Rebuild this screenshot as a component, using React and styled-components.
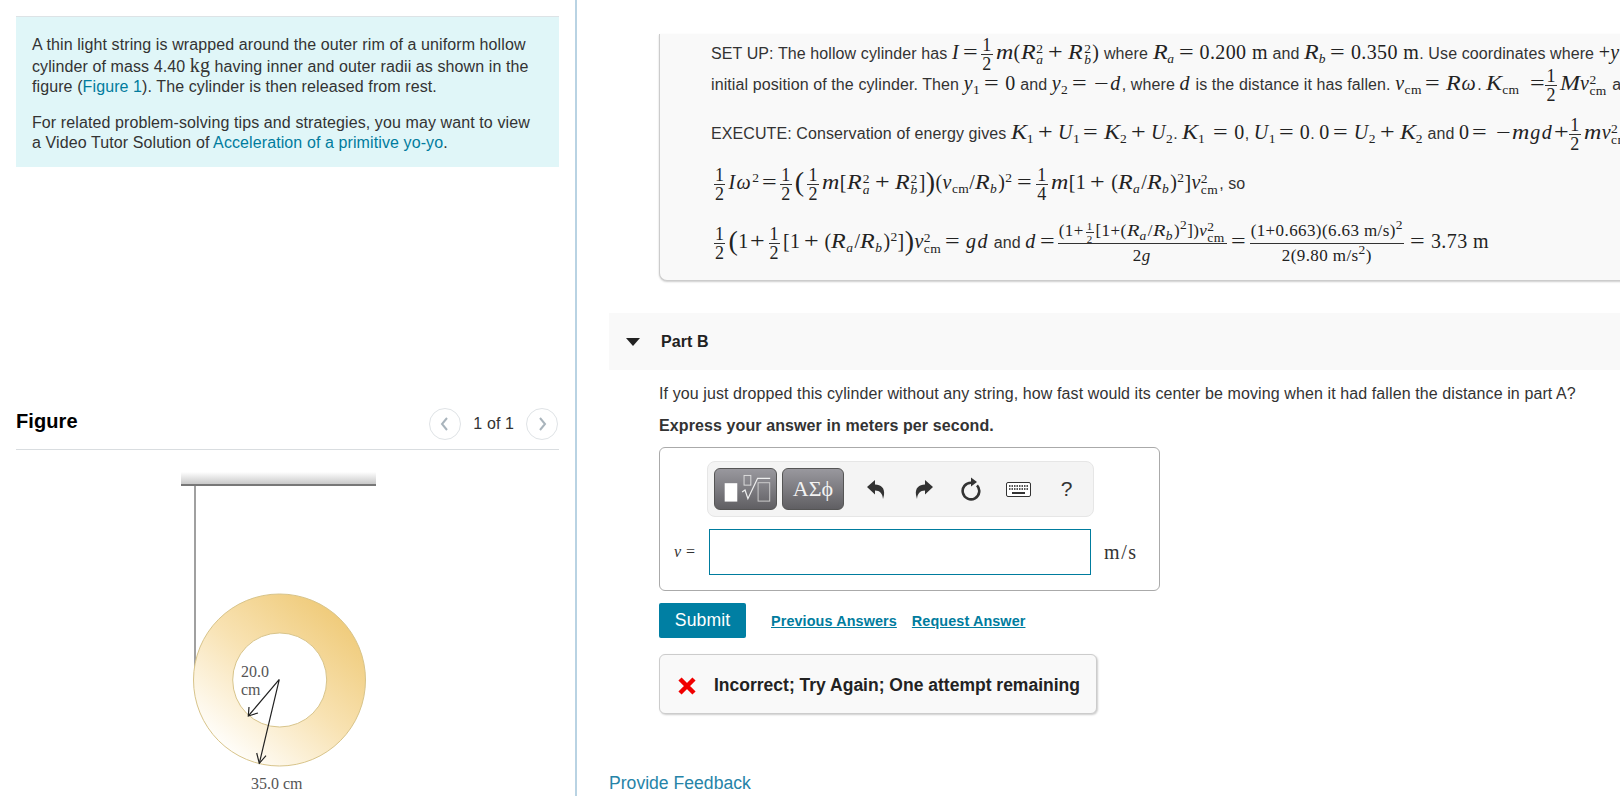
import React from 'react';
import styled, { createGlobalStyle } from 'styled-components';

const Global = createGlobalStyle`
  html, body {
    margin: 0;
    padding: 0;
    height: 796px;
    overflow: hidden;
    background: #fff;
    font-family: "Liberation Sans", Arial, sans-serif;
    font-size: 16px;
    letter-spacing: 0.1px;
    color: #333;
  }
`;

const Page = styled.div`
  display: flex;
  width: 1620px;
  height: 796px;
  overflow: hidden;
`;

const LeftPane = styled.div`
  box-sizing: border-box;
  width: 577px;
  flex: none;
  padding: 16px 16px 0;
  border-right: 2px solid #b9d3e3;
`;

const InfoBox = styled.div`
  box-sizing: border-box;
  height: 151px;
  padding: 18px 16px 0;
  line-height: 20px;
  background: #e0f6f8;
  border-top: 1px solid #dde3e6;
`;

const Para = styled.p`
  margin: 0 0 16px;
  white-space: nowrap;
`;

const TextLink = styled.a`
  color: #007c9e;
`;

const Kg = styled.span`
  font-family: "Liberation Serif", serif;
  font-size: 20px;
`;

const FigureHeader = styled.div`
  display: flex;
  justify-content: space-between;
  align-items: flex-start;
  height: 31px;
  margin-top: 241px;
  padding-bottom: 10px;
  border-bottom: 1px solid #d9dde0;
`;

const FigureTitle = styled.h2`
  margin: 0;
  font-size: 20px;
  line-height: 26px;
  font-weight: bold;
  color: #000;
`;

const Pager = styled.div`
  display: flex;
  align-items: center;
  gap: 12px;
  margin-right: 1px;
`;

const PagerButton = styled.span`
  display: flex;
  align-items: center;
  justify-content: center;
  box-sizing: border-box;
  width: 32px;
  height: 32px;
  border: 1px solid #dfe3e6;
  border-radius: 50%;
`;

const FigureArt = styled.svg`
  display: block;
`;

const RightPane = styled.div`
  flex: 1;
  min-width: 0;
  padding: 34px 0 0 32px;
  overflow: hidden;
`;

const Solution = styled.div`
  box-sizing: border-box;
  width: calc(100% + 20px);
  margin-left: 50px;
  height: 247px;
  padding: 3px 0 0 51px;
  background: #f9f9f9;
  border-left: 1px solid #ccc;
  border-bottom: 1px solid #ccc;
  border-bottom-left-radius: 8px;
  box-shadow: 0 1px 2px rgba(0, 0, 0, 0.2);
`;

const Line = styled.div`
  height: 30px;
  line-height: 30px;
  margin-top: ${p => p.$gap || 0}px;
  white-space: nowrap;
`;

const Tex = styled.span`
  font-family: "Liberation Serif", serif;
  font-size: 20px;
  letter-spacing: 0.4px;
  color: #222;

  i {
    letter-spacing: 1.5px;
  }
`;

// Times capitals run narrower than the math font, so stretch them in place
const Wide = styled.i`
  && {
    display: inline-block;
    margin-right: 3.5px;
    letter-spacing: 0;
    transform: scaleX(1.2);
    transform-origin: 0 50%;
  }
`;

const Op = styled.span`
  display: inline-block;
  width: 15px;
  text-align: center;
  transform: scaleX(1.3);
  margin: 0 ${p => (p.$tight ? 1 : p.$r ?? 6)}px 0 ${p => (p.$tight ? 1 : p.$l ?? 3)}px;
`;

const Sub = styled.sub`
  font-size: 13.5px;
  line-height: 0;
  vertical-align: -4px;
  margin-left: -1px;
`;

const Sup = styled.sup`
  font-size: 13.5px;
  line-height: 0;
  vertical-align: 7px;
`;

const StackBox = styled.span`
  display: inline-flex;
  flex-direction: column;
  align-items: flex-start;
  vertical-align: middle;
  margin: -3px 1px -3px ${p => (p.$tuck ? -1 : 0)}px;
  font-size: 13.5px;
  line-height: 11px;

  i {
    letter-spacing: 0;
  }
`;

const FracBox = styled.span`
  display: inline-flex;
  flex-direction: column;
  align-items: center;
  vertical-align: middle;
  margin: -${p => (p.$size ? 16 : 5)}px 3px;
  font-size: ${p => p.$size || 18}px;
  line-height: ${p => (p.$size ? 24 : 18)}px;
`;

const FracTop = styled.span`
  padding: 0 1px;
  border-bottom: 1px solid #333;
`;

const Big = styled.span`
  font-size: 28px;
  font-weight: 300;
  line-height: 0;
  vertical-align: -2px;
`;

const Frac = ({ n, d, size }) => (
  <FracBox $size={size}>
    <FracTop>{n}</FracTop>
    <span>{d}</span>
  </FracBox>
);

const Stack = ({ sup, sub }) => (
  <StackBox>
    <span>{sup}</span>
    <i>{sub}</i>
  </StackBox>
);

const Half = ({ size }) => <Frac n="1" d="2" size={size} />;

const MiniFrac = styled.span`
  display: inline-flex;
  flex-direction: column;
  align-items: center;
  vertical-align: middle;
  margin: -8px 2px;
  font-size: 11px;
  line-height: 12px;
`;

const Vcm2 = () => (
  <>
    <i>v</i>
    <StackBox $tuck>
      <span>2</span>
      <span>cm</span>
    </StackBox>
  </>
);

const BandTitle = styled.div`
  display: flex;
  align-items: center;
  height: 57px;
  margin-top: 32px;
  padding-left: 17px;
  gap: 21px;
  background: #f9f9f9;
  font-weight: bold;
  color: #222;
`;

const Triangle = styled.span`
  width: 0;
  height: 0;
  border-left: 7px solid transparent;
  border-right: 7px solid transparent;
  border-top: 8px solid #222;
`;

const PartBody = styled.div`
  padding-left: 50px;
`;

const Question = styled.p`
  margin: 14px 0 0;
  line-height: 20px;
  white-space: nowrap;
`;

const Instruction = styled.p`
  margin: 12px 0 0;
  line-height: 20px;
  font-weight: bold;
`;

const AnswerBox = styled.div`
  box-sizing: border-box;
  width: 501px;
  height: 144px;
  margin-top: 11px;
  padding-top: 13px;
  border: 1px solid #aaa;
  border-radius: 6px;
`;

const Toolbar = styled.div`
  box-sizing: border-box;
  display: flex;
  align-items: center;
  width: 387px;
  height: 56px;
  margin-left: 47px;
  padding-left: 6px;
  background: #f4f4f4;
  border: 1px solid #e6e6e6;
  border-radius: 8px;
`;

const ToolButton = styled.span`
  box-sizing: border-box;
  display: flex;
  align-items: center;
  justify-content: center;
  width: ${p => p.$w}px;
  height: 42px;
  margin-right: 5px;
  background: linear-gradient(#99989e, #605f63);
  border: 1px solid #555;
  border-radius: 6px;
  color: #f2f2f2;
  font-family: "Liberation Serif", serif;
  font-size: 22px;
`;

const ToolIcon = styled.span`
  display: flex;
  align-items: center;
  justify-content: center;
  width: 47.7px;
  margin-left: ${p => (p.$first ? 3 : 0)}px;
  color: #333;
  font-size: ${p => p.$size || 18}px;
`;

const InputRow = styled.div`
  display: flex;
  align-items: center;
  margin-top: 12px;
`;

const InputLabel = styled.span`
  box-sizing: border-box;
  width: 49px;
  padding-left: 14px;
  font-family: "Liberation Serif", serif;
  font-size: 16px;
  letter-spacing: 0.5px;
  white-space: nowrap;
`;

const AnswerInput = styled.span`
  box-sizing: border-box;
  display: block;
  width: 382px;
  height: 46px;
  border: 1px solid #007c9e;
`;

const Unit = styled.span`
  margin-left: 13px;
  font-family: "Liberation Serif", serif;
  font-size: 20px;
  letter-spacing: 1.6px;
`;

const ActionRow = styled.div`
  display: flex;
  align-items: center;
  margin-top: 12px;
`;

const SubmitButton = styled.span`
  display: flex;
  align-items: center;
  justify-content: center;
  width: 87px;
  height: 35px;
  background: #007fa3;
  border-radius: 2px;
  color: #fff;
  font-size: 17.6px;
`;

const ActionLink = styled.a`
  margin-left: ${p => p.$gap}px;
  color: #007c9e;
  font-size: 14.4px;
  font-weight: bold;
  text-decoration: underline;
`;

const Feedback = styled.div`
  box-sizing: border-box;
  display: flex;
  align-items: center;
  gap: 18px;
  width: 438px;
  height: 60px;
  margin-top: 16px;
  padding: 3px 0 0 18px;
  background: #f9f9f9;
  border: 1px solid #ccc;
  border-radius: 6px;
  box-shadow: 1px 1px 2px rgba(0, 0, 0, 0.2);
  color: #222;
  font-size: 17.5px;
  font-weight: bold;
  letter-spacing: 0;
  white-space: nowrap;
`;

const ProvideFeedback = styled.a`
  display: block;
  margin-top: 59px;
  line-height: 20px;
  font-size: 17.6px;
  letter-spacing: 0;
  color: #2684a8;
`;

const Chevron = ({ d }) => (
  <svg width="12" height="16" viewBox="0 0 12 16">
    <path d={d} fill="none" stroke="#a9b4bc" strokeWidth="2" />
  </svg>
);

const Cylinder = () => (
  <FigureArt width="543" height="346" viewBox="16 450 543 346">
    <defs>
      <linearGradient id="bar" x1="0" y1="0" x2="0" y2="1">
        <stop offset="0" stopColor="#ffffff" />
        <stop offset="1" stopColor="#c4c4c4" />
      </linearGradient>
      <linearGradient id="ring" x1="0.88" y1="0.12" x2="0.2" y2="0.92">
        <stop offset="0" stopColor="#efca78" />
        <stop offset="0.5" stopColor="#f8e2b2" />
        <stop offset="1" stopColor="#fffefb" />
      </linearGradient>
    </defs>
    <rect x="181" y="472" width="195" height="13" fill="url(#bar)" />
    <rect x="181" y="484" width="195" height="2" fill="#777" />
    <rect x="194" y="486" width="2" height="181" fill="#a0a0a0" />
    <path
      fillRule="evenodd"
      d="M193.5 680a86 86 0 1 0 172 0a86 86 0 1 0 -172 0zM232.7 680a47 47 0 1 0 94 0a47 47 0 1 0 -94 0z"
      fill="url(#ring)"
      stroke="#d8c48a"
    />
    <g fill="none" stroke="#222" strokeWidth="1.2">
      <path d="M279.3 679.3L248.3 716M279.3 679.3L259.3 763.3" />
      <path d="M249 707L248.3 716L258 713M256.7 753L259.3 763.3L266 755.7" />
    </g>
    <g fontFamily="Liberation Serif, serif" fontSize="16" fill="#555" letterSpacing="0">
      <text x="241" y="677">20.0</text>
      <text x="241" y="695">cm</text>
      <text x="251" y="789">35.0 cm</text>
    </g>
  </FigureArt>
);

const ArrowGlyph = ({ flip }) => (
  <svg width="18" height="20" viewBox="0 0 18 20" style={flip ? { transform: 'scaleX(-1)' } : undefined}>
    <path d="M0 8L8 1V5.5C14 5.5 18 9 17 16L16 20C15.5 14.5 13 11.5 8 11.5V15.5Z" fill="#333" />
  </svg>
);

const App = () => (
  <Page>
    <Global />
    <LeftPane>
      <InfoBox>
        <Para>
          A thin light string is wrapped around the outer rim of a uniform hollow<br />
          cylinder of mass 4.40 <Kg>kg</Kg> having inner and outer radii as shown in the<br />
          figure (<TextLink>Figure 1</TextLink>). The cylinder is then released from rest.
        </Para>
        <Para>
          For related problem-solving tips and strategies, you may want to view<br />
          a Video Tutor Solution of <TextLink>Acceleration of a primitive yo-yo</TextLink>.
        </Para>
      </InfoBox>
      <FigureHeader>
        <FigureTitle>Figure</FigureTitle>
        <Pager>
          <PagerButton><Chevron d="M8 2L3 8L8 14" /></PagerButton>
          <span>1 of 1</span>
          <PagerButton><Chevron d="M4 2L9 8L4 14" /></PagerButton>
        </Pager>
      </FigureHeader>
      <Cylinder />
    </LeftPane>
    <RightPane>
      <Solution>
        <Line>
          SET UP: The hollow cylinder has{' '}
          <Tex>
            <i>I</i><Op $r={0}>=</Op><Half /><Wide>m</Wide>(<Wide>R</Wide><Stack sup="2" sub="a" /><Op $l={4} $r={5}>+</Op><Wide>R</Wide><Stack sup="2" sub="b" />)
          </Tex>{' '}
          where{' '}
          <Tex><Wide>R</Wide><Sub><i>a</i></Sub><Op>=</Op>0.200 m</Tex> and{' '}
          <Tex><Wide>R</Wide><Sub><i>b</i></Sub><Op>=</Op>0.350 m</Tex>. Use coordinates where <Tex>+<i>y</i></Tex> is downward
        </Line>
        <Line $gap={1}>
          initial position of the cylinder. Then{' '}
          <Tex><i>y</i><Sub>1</Sub><Op $l={4}>=</Op>0</Tex> and{' '}
          <Tex><i>y</i><Sub>2</Sub><Op $l={4}>=</Op><Op $tight>−</Op><i>d</i></Tex>, where <Tex><i>d</i></Tex> is the distance it has fallen.{' '}
          <Tex><i>v</i><Sub>cm</Sub><Op>=</Op><Wide>R</Wide><i>ω</i></Tex>.{' '}
          <Tex><Wide>K</Wide><Sub>cm</Sub><Op $l={11} $r={-3}>=</Op><Half /><Wide>M</Wide><Vcm2 /></Tex> and
        </Line>
        <Line $gap={19}>
          EXECUTE: Conservation of energy gives{' '}
          <Tex><Wide>K</Wide><Sub>1</Sub><Op $l={4} $r={5}>+</Op><i>U</i><Sub>1</Sub><Op>=</Op><Wide>K</Wide><Sub>2</Sub><Op $l={4} $r={5}>+</Op><i>U</i><Sub>2</Sub></Tex>.{' '}
          <Tex><Wide>K</Wide><Sub>1</Sub><Op $l={8}>=</Op>0</Tex>,{' '}
          <Tex><i>U</i><Sub>1</Sub><Op>=</Op>0</Tex>.{' '}
          <Tex>0<Op>=</Op><i>U</i><Sub>2</Sub><Op $l={4} $r={5}>+</Op><Wide>K</Wide><Sub>2</Sub></Tex> and{' '}
          <Tex>0<Op $r={8}>=</Op><Op $tight>−</Op><Wide>m</Wide><i>gd</i><Op $l={1} $r={-3}>+</Op><Half /><Wide>m</Wide><Vcm2 /></Tex>
        </Line>
        <Line $gap={20}>
          <Tex>
            <Half /><i>Iω</i><Sup>2</Sup><Op $r={0}>=</Op><Half /><Big>(</Big><Half /><Wide>m</Wide>[<Wide>R</Wide><Stack sup="2" sub="a" /><Op $l={4} $r={5}>+</Op><Wide>R</Wide><Stack sup="2" sub="b" />]<Big>)</Big>(<i>v</i><Sub>cm</Sub>/<Wide>R</Wide><Sub><i>b</i></Sub>)<Sup>2</Sup><Op $l={5} $r={1}>=</Op><Frac n="1" d="4" /><Wide>m</Wide>[1<Op $l={4} $r={6}>+</Op>(<Wide>R</Wide><Sub><i>a</i></Sub>/<Wide>R</Wide><Sub><i>b</i></Sub>)<Sup>2</Sup>]<Vcm2 />
          </Tex>, so
        </Line>
        <Line $gap={29}>
          <Tex>
            <Half /><Big>(</Big>1<Op $tight>+</Op><Half />[1<Op $l={4} $r={5}>+</Op>(<Wide>R</Wide><Sub><i>a</i></Sub>/<Wide>R</Wide><Sub><i>b</i></Sub>)<Sup>2</Sup>]<Big>)</Big><Vcm2 /><Op>=</Op><i>gd</i>
          </Tex>{' '}
          and{' '}
          <Tex>
            <i>d</i><Op $r={0}>=</Op>
            <Frac
              size={17}
              n={
                <>
                  (1+
                  <MiniFrac><FracTop>1</FracTop><span>2</span></MiniFrac>
                  [1+(<Wide>R</Wide><Sub><i>a</i></Sub>/<Wide>R</Wide><Sub><i>b</i></Sub>)<Sup>2</Sup>])<Vcm2 />
                </>
              }
              d={<>2<i>g</i></>}
            />
            <Op $tight>=</Op>
            <Frac size={17} n={<>(1+0.663)(6.63 m/s)<Sup>2</Sup></>} d={<>2(9.80 m/s<Sup>2</Sup>)</>} />
            <Op>=</Op>3.73 m
          </Tex>
        </Line>
      </Solution>
      <BandTitle>
        <Triangle />
        Part B
      </BandTitle>
      <PartBody>
        <Question>
          If you just dropped this cylinder without any string, how fast would its center be moving when it had fallen the distance in part A?
        </Question>
        <Instruction>Express your answer in meters per second.</Instruction>
        <AnswerBox>
          <Toolbar>
            <ToolButton $w={63}>
              <svg width="63" height="42" viewBox="0 0 63 42">
                <rect x="10" y="15" width="13" height="19" fill="#fff" />
                <rect x="30" y="7" width="7" height="10" fill="none" stroke="#ddd" />
                <path d="M28 24L31 22L34 31L44 10H57" fill="none" stroke="#eee" strokeWidth="1.3" />
                <rect x="44.5" y="14.5" width="12" height="19" fill="none" stroke="#ccc" />
              </svg>
            </ToolButton>
            <ToolButton $w={62}>ΑΣϕ</ToolButton>
            <ToolIcon $first><ArrowGlyph /></ToolIcon>
            <ToolIcon><ArrowGlyph flip /></ToolIcon>
            <ToolIcon>
              <svg width="22" height="24" viewBox="0 0 22 24">
                <path d="M11 5.7A8.3 8.3 0 1 0 17 8.3" fill="none" stroke="#333" strokeWidth="2.6" />
                <path d="M11 0.5V9.5L17 5Z" fill="#333" />
              </svg>
            </ToolIcon>
            <ToolIcon>
              <svg width="25" height="15" viewBox="0 0 25 15">
                <rect x="0.5" y="0.5" width="24" height="14" rx="1.5" fill="#fff" stroke="#333" />
                <path d="M3 4h19M3 7h19" stroke="#555" strokeWidth="2" strokeDasharray="1.5 1" />
                <path d="M6 11h13" stroke="#333" strokeWidth="2" />
              </svg>
            </ToolIcon>
            <ToolIcon $size={21}>?</ToolIcon>
          </Toolbar>
          <InputRow>
            <InputLabel><i>v</i> =</InputLabel>
            <AnswerInput />
            <Unit>m/s</Unit>
          </InputRow>
        </AnswerBox>
        <ActionRow>
          <SubmitButton>Submit</SubmitButton>
          <ActionLink $gap={25}>Previous Answers</ActionLink>
          <ActionLink $gap={15}>Request Answer</ActionLink>
        </ActionRow>
        <Feedback>
          <svg width="18" height="18" viewBox="0 0 18 18">
            <path d="M2 2L16 16M16 2L2 16" stroke="#f00000" strokeWidth="4.5" />
          </svg>
          Incorrect; Try Again; One attempt remaining
        </Feedback>
      </PartBody>
      <ProvideFeedback>Provide Feedback</ProvideFeedback>
    </RightPane>
  </Page>
);

export default App;
